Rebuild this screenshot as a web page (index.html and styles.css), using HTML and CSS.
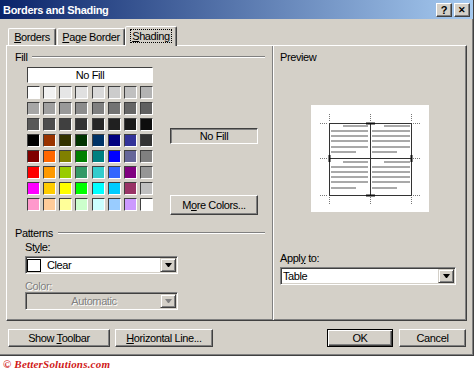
FILE: index.html
```html
<!DOCTYPE html>
<html lang="en">

<head>
     <meta charset="UTF-8" />
     <title>Borders and Shading</title>
     <link rel="stylesheet" href="styles.css">
</head>

<body>

     <div class="dialog">
          <div class="titlebar">
               <span class="title">Borders and Shading</span>
               <div class="title-btns">
                    <span class="tbtn">?</span>
                    <span class="tbtn close">&#x2715;</span>
               </div>
          </div>

          <div class="body">
               <div class="tabs">
                    <div class="tab t-borders"><u>B</u>orders</div>
                    <div class="tab t-page"><u>P</u>age Border</div>
                    <div class="tab t-shading active"><span class="focus"><u>S</u>hading</span></div>
               </div>

               <div class="panel">
                    <div class="left">
                         <div class="group-head"><span>Fill</span><span class="rule"></span></div>

                         <div class="fill">
                              <div class="swatches">
                                   <div class="nofill-bar">No Fill</div>
                                   <div class="grid" id="grid"></div>
                              </div>
                              <div class="side">
                                   <div class="nofill-show">No Fill</div>
                                   <div class="btn more">M<u>o</u>re Colors...</div>
                              </div>
                         </div>

                         <div class="group-head patterns"><span>Patterns</span><span class="rule"></span></div>

                         <div class="field-label">St<u>y</u>le:</div>
                         <div class="select style-select">
                              <span class="pat-box"></span>
                              <span class="value">Clear</span>
                              <span class="arrow"><i></i></span>
                         </div>

                         <div class="field-label disabled color-label">Color:</div>
                         <div class="select style-select disabled">
                              <span class="value center">Automatic</span>
                              <span class="arrow"><i></i></span>
                         </div>
                    </div>

                    <div class="sep"></div>

                    <div class="right">
                         <div class="preview-label">Preview</div>
                         <div class="preview">
                              <svg width="118" height="107" viewBox="0 0 118 107">
                                   <g stroke="#a9a9a9" stroke-width="2">
                                        <line x1="32" y1="21" x2="57" y2="21" />
                                        <line x1="20" y1="26" x2="57" y2="26" />
                                        <line x1="20" y1="31" x2="57" y2="31" />
                                        <line x1="20" y1="36" x2="57" y2="36" />
                                        <line x1="20" y1="42" x2="57" y2="42" />
                                        <line x1="20" y1="47" x2="45" y2="47" />
                                        <line x1="73" y1="21" x2="99" y2="21" />
                                        <line x1="61" y1="26" x2="99" y2="26" />
                                        <line x1="61" y1="31" x2="99" y2="31" />
                                        <line x1="61" y1="36" x2="99" y2="36" />
                                        <line x1="61" y1="42" x2="99" y2="42" />
                                        <line x1="61" y1="47" x2="86" y2="47" />
                                        <line x1="32" y1="57" x2="57" y2="57" />
                                        <line x1="20" y1="62" x2="57" y2="62" />
                                        <line x1="20" y1="67" x2="57" y2="67" />
                                        <line x1="20" y1="72" x2="57" y2="72" />
                                        <line x1="20" y1="77" x2="57" y2="77" />
                                        <line x1="20" y1="83" x2="45" y2="83" />
                                        <line x1="73" y1="57" x2="99" y2="57" />
                                        <line x1="61" y1="62" x2="99" y2="62" />
                                        <line x1="61" y1="67" x2="99" y2="67" />
                                        <line x1="61" y1="72" x2="99" y2="72" />
                                        <line x1="61" y1="77" x2="99" y2="77" />
                                        <line x1="61" y1="83" x2="86" y2="83" />
                                   </g>
                                   <g stroke="#777" stroke-width="1" stroke-dasharray="1 1">
                                        <line x1="9" y1="18.5" x2="17" y2="18.5" />
                                        <line x1="102" y1="18.5" x2="110" y2="18.5" />
                                        <line x1="9" y1="53.5" x2="17" y2="53.5" />
                                        <line x1="102" y1="53.5" x2="110" y2="53.5" />
                                        <line x1="9" y1="90.5" x2="17" y2="90.5" />
                                        <line x1="102" y1="90.5" x2="110" y2="90.5" />
                                        <line x1="18.5" y1="9" x2="18.5" y2="17" />
                                        <line x1="59.5" y1="9" x2="59.5" y2="17" />
                                        <line x1="100.5" y1="9" x2="100.5" y2="17" />
                                        <line x1="18.5" y1="92" x2="18.5" y2="100" />
                                        <line x1="59.5" y1="92" x2="59.5" y2="100" />
                                        <line x1="100.5" y1="92" x2="100.5" y2="100" />
                                   </g>
                                   <g stroke="#333" stroke-width="1" fill="none">
                                        <rect x="18.5" y="18.5" width="82" height="72" />
                                        <line x1="59.5" y1="18" x2="59.5" y2="91" />
                                        <line x1="18" y1="53.5" x2="101" y2="53.5" />
                                   </g>
                                   <g stroke="#111" stroke-width="2">
                                        <line x1="55" y1="18.5" x2="64" y2="18.5" />
                                        <line x1="55" y1="90.5" x2="64" y2="90.5" />
                                        <line x1="18.5" y1="50" x2="18.5" y2="57" />
                                        <line x1="100.5" y1="50" x2="100.5" y2="57" />
                                   </g>
                              </svg>
                         </div>
                         <div class="preview-label apply-label">Appl<u>y</u> to:</div>
                         <div class="select apply-select">
                              <span class="value">Table</span>
                              <span class="arrow"><i></i></span>
                         </div>
                    </div>
               </div>

               <div class="actions">
                    <div class="btn wide1">Show <u>T</u>oolbar</div>
                    <div class="btn wide2"><u>H</u>orizontal Line...</div>
                    <div class="btn ok">OK</div>
                    <div class="btn cancel">Cancel</div>
               </div>
          </div>
     </div>

     <div class="credit">&copy; BetterSolutions.com</div>

     <script>
          const colors = [
               "#ffffff", "#f2f2f2", "#e6e6e6", "#e0e0e0", "#d9d9d9", "#cccccc", "#c0c0c0", "#b3b3b3",
               "#a6a6a6", "#a0a0a0", "#999999", "#8c8c8c", "#808080", "#737373", "#666666", "#606060",
               "#595959", "#4d4d4d", "#404040", "#333333", "#262626", "#202020", "#1a1a1a", "#0d0d0d",
               "#000000", "#993300", "#333300", "#003300", "#003366", "#000080", "#333399", "#333333",
               "#800000", "#ff6600", "#808000", "#008000", "#008080", "#0000ff", "#666699", "#808080",
               "#ff0000", "#ff9900", "#99cc00", "#339966", "#33cccc", "#3366ff", "#800080", "#969696",
               "#ff00ff", "#ffcc00", "#ffff00", "#00ff00", "#00ffff", "#00ccff", "#993366", "#c0c0c0",
               "#ff99cc", "#ffcc99", "#ffff99", "#ccffcc", "#ccffff", "#99ccff", "#cc99ff", "#ffffff"
          ];
          const grid = document.getElementById("grid");
          colors.forEach(c => {
               const sw = document.createElement("div");
               sw.className = "sw";
               sw.style.background = c;
               grid.appendChild(sw);
          });
     </script>

</body>

</html>
```

FILE: styles.css
```css
* {
     box-sizing: border-box;
     margin: 0;
     padding: 0;
}

body {
     width: 474px;
     background: #fff;
     font-family: 'Liberation Sans', Arial, sans-serif;
     font-size: 11px;
     letter-spacing: -0.4px;
     color: #000;
}

u {
     text-decoration: underline;
     text-underline-offset: 1px;
}

.dialog {
     width: 474px;
     height: 356px;
     background: #d4d0c8;
     border-right: 1px solid #404040;
     border-bottom: 1px solid #404040;
     box-shadow: inset -1px -1px 0 #808080;
     display: flex;
     flex-direction: column;
}

/* title bar */
.titlebar {
     height: 19px;
     flex: none;
     display: flex;
     align-items: center;
     justify-content: space-between;
     padding: 0 3px 0 3px;
     background: linear-gradient(to right, #0a246a, #a6caf0);
     color: #fff;
     font-weight: bold;
     letter-spacing: -0.3px;
}

.title-btns {
     display: flex;
     gap: 2px;
}

.tbtn {
     width: 16px;
     height: 14px;
     background: #d4d0c8;
     border: 1px solid;
     border-color: #fff #404040 #404040 #fff;
     box-shadow: inset -1px -1px 0 #808080;
     color: #000;
     font-size: 11px;
     line-height: 12px;
     text-align: center;
     letter-spacing: 0;
}

.tbtn.close {
     font-size: 9px;
}

/* body */
.body {
     flex: 1;
     display: flex;
     flex-direction: column;
     padding: 7px 6px 8px 6px;
}

.tabs {
     height: 19px;
     display: flex;
     align-items: flex-end;
     padding-left: 2px;
     position: relative;
     z-index: 1;
}

.tab {
     height: 17px;
     padding-top: 2px;
     line-height: 12px;
     text-align: center;
     border: 1px solid;
     border-bottom: none;
     border-color: #fff #404040 transparent #fff;
     box-shadow: inset -1px 0 0 #808080;
     border-radius: 2px 2px 0 0;
     margin-right: 1px;
}

.t-borders {
     width: 48px;
}

.t-page {
     width: 68px;
}

.t-shading {
     width: 52px;
}

.tab.active {
     height: 20px;
     margin: 0 0 -1px -1px;
     padding-top: 2px;
     background: #d4d0c8;
}

.focus {
     display: inline-block;
     border: 1px dotted #000;
     padding: 0 1px;
     line-height: 12px;
}

.panel {
     height: 276px;
     display: flex;
     border: 1px solid;
     border-color: #fff #404040 #404040 #fff;
     box-shadow: inset -1px -1px 0 #808080;
}

.left {
     width: 265px;
     padding: 5px 7px 0 8px;
     display: flex;
     flex-direction: column;
}

.sep {
     width: 2px;
     border-left: 1px solid #808080;
     border-right: 1px solid #fff;
}

.right {
     flex: 1;
     padding: 5px 0 0 6px;
     display: flex;
     flex-direction: column;
}

.group-head {
     height: 12px;
     line-height: 12px;
     display: flex;
     align-items: center;
     gap: 5px;
}

.rule {
     flex: 1;
     height: 2px;
     border-top: 1px solid #808080;
     border-bottom: 1px solid #fff;
}

.fill {
     display: flex;
     margin: 4px 0 0 12px;
}

.swatches {
     width: 126px;
}

.nofill-bar {
     height: 16px;
     background: #fff;
     border: 1px solid;
     border-color: #404040 #fff #fff #404040;
     text-align: center;
     line-height: 14px;
}

.grid {
     margin-top: 3px;
     display: grid;
     grid-template-columns: repeat(8, 13px);
     grid-auto-rows: 13px;
     justify-content: space-between;
     row-gap: 3px;
}

.sw {
     border: 1px solid;
     border-color: #404040 #fff #fff #404040;
}

.side {
     width: 88px;
     margin-left: 17px;
     padding-top: 61px;
     display: flex;
     flex-direction: column;
}

.nofill-show {
     height: 16px;
     border: 1px solid;
     border-color: #404040 #fff #fff #404040;
     box-shadow: inset 1px 1px 0 #808080;
     text-align: center;
     line-height: 14px;
}

.btn {
     background: #d4d0c8;
     border: 1px solid;
     border-color: #fff #404040 #404040 #fff;
     box-shadow: inset -1px -1px 0 #808080;
     text-align: center;
}

.more {
     height: 20px;
     line-height: 18px;
     margin-top: 51px;
}

.patterns {
     margin-top: 12px;
}

.field-label {
     margin: 2px 0 0 10px;
     line-height: 12px;
}

.disabled {
     color: #808080;
}

.field-label.disabled {
     text-shadow: 1px 1px 0 #fff;
}

.color-label {
     margin-top: 6px;
}

.select {
     height: 18px;
     display: flex;
     align-items: center;
     padding: 1px;
     background: #fff;
     border: 1px solid;
     border-color: #808080 #fff #fff #808080;
     box-shadow: inset 1px 1px 0 #404040, inset -1px -1px 0 #d4d0c8;
}

.style-select {
     width: 153px;
     margin: 3px 0 0 10px;
}

.select.disabled {
     margin-top: 0;
     background: #d4d0c8;
}

.pat-box {
     width: 14px;
     height: 13px;
     margin-right: 5px;
     background: #fff;
     border: 1px solid #000;
}

.value {
     flex: 1;
     padding-left: 1px;
     line-height: 12px;
}

.value.center {
     text-align: center;
     text-shadow: 1px 1px 0 #fff;
}

.arrow {
     width: 16px;
     height: 14px;
     display: flex;
     align-items: center;
     justify-content: center;
     background: #d4d0c8;
     border: 1px solid;
     border-color: #d4d0c8 #404040 #404040 #d4d0c8;
     box-shadow: inset 1px 1px 0 #fff, inset -1px -1px 0 #808080;
}

.arrow i {
     width: 1px;
     height: 0;
     border-top: 4px solid #000;
     border-left: 3px solid transparent;
     border-right: 3px solid transparent;
     box-sizing: content-box;
}

.disabled .arrow i {
     border-top-color: #808080;
}

.preview-label {
     line-height: 12px;
}

.preview {
     width: 118px;
     height: 107px;
     margin: 42px 0 0 31px;
     background: #fff;
}

.preview svg {
     display: block;
}

.apply-label {
     margin-top: 40px;
}

.apply-select {
     width: 176px;
     margin-top: 3px;
}

/* bottom buttons */
.actions {
     height: 18px;
     margin-top: 8px;
     display: flex;
     padding: 0 1px 0 2px;
}

.actions .btn {
     line-height: 16px;
}

.wide1 {
     width: 102px;
     margin-right: 5px;
}

.wide2 {
     width: 98px;
}

.ok {
     width: 66px;
     margin-left: auto;
     margin-right: 6px;
     border-color: #000;
     box-shadow: inset 1px 1px 0 #fff, inset -1px -1px 0 #404040, inset -2px -2px 0 #808080;
}

.cancel {
     width: 67px;
}

.credit {
     padding: 2px 0 0 3px;
     color: #d01818;
     font-family: 'Liberation Serif', 'Times New Roman', serif;
     font-style: italic;
     font-weight: bold;
     font-size: 11px;
     letter-spacing: 0.2px;
}
```
